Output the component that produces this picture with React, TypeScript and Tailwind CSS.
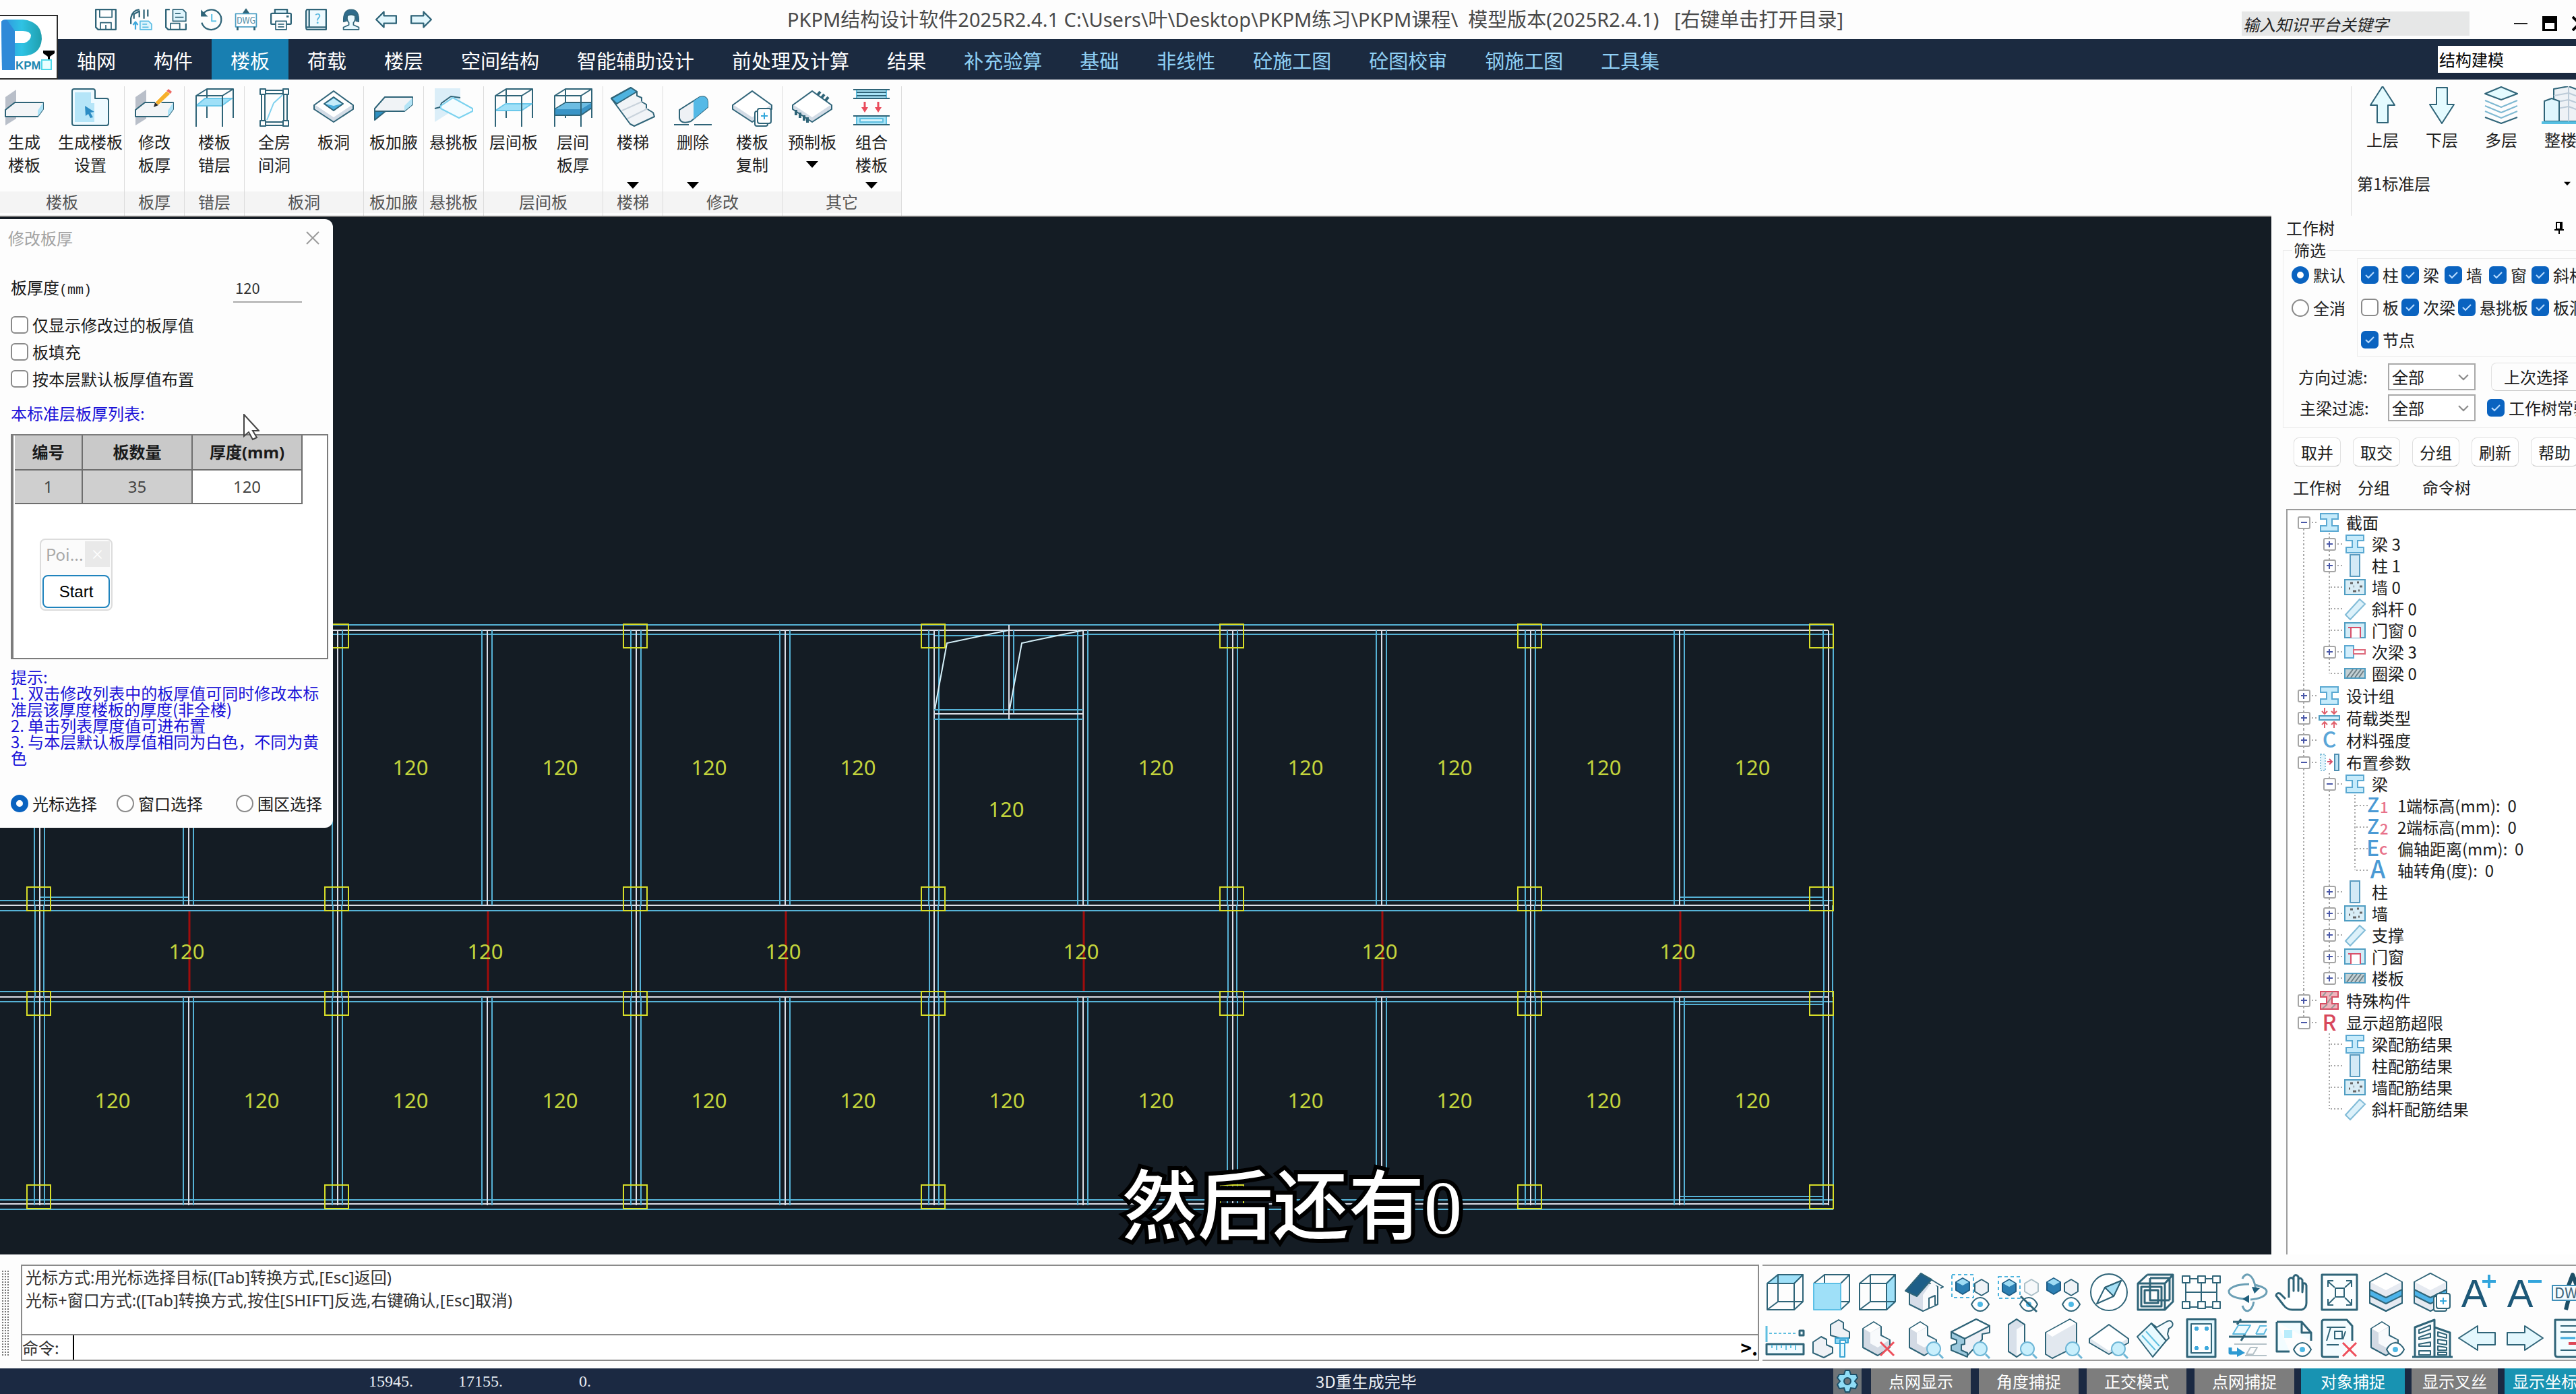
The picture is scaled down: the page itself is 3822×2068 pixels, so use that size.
import React from 'react';
import clsx from 'clsx';

const INK = '#2f6478';
const CYAN = '#9fe0f8';
const PALE = '#e3f7fd';

type IconProps = { children: React.ReactNode; className?: string };

const Ic: React.FC<IconProps> = ({ children, className = 'w-14 h-14' }) => (
  <svg
    viewBox="0 0 56 56"
    className={clsx('shrink-0 overflow-visible', className)}
    fill="none"
    stroke={INK}
    strokeWidth="2"
    strokeLinejoin="round"
    aria-hidden="true"
  >
    {children}
  </svg>
);

/* ---------- shared icon parts ---------- */

const Mag = ({ x = 42, y = 44 }) => (
  <g stroke="#6db6d6">
    <path d={`M${x + 8} ${y + 8} l6 6`} strokeWidth="3" />
    <circle cx={x} cy={y} r="10" fill="#c9effc" />
  </g>
);
const Eye = ({ x = 42, y = 46 }) => (
  <g>
    <path
      d={`M${x - 13} ${y} q5 -10 13 -10 q8 0 13 10 q-5 10 -13 10 q-8 0 -13 -10z`}
      fill="#fff"
    />
    <circle cx={x} cy={y} r="4" fill="#4fb9e6" stroke="none" />
  </g>
);
const RedX = ({ x = 42, y = 44 }) => (
  <path
    d={`M${x - 10} ${y - 10} l20 20 M${x + 10} ${y - 10} l-20 20`}
    stroke="#ee4f5b"
    strokeWidth="3"
  />
);
const CopyBadge = ({ x = 30, y = 30 }) => (
  <g>
    <rect x={x} y={y + 4} width="19" height="22" rx="3" fill="#fff" />
    <rect x={x + 4} y={y} width="20" height="22" rx="3" fill="#fff" />
    <path d={`M${x + 14} ${y + 6} v10 M${x + 9} ${y + 11} h10`} stroke="#35a8dc" />
  </g>
);
const LBlock = () => (
  <g>
    <path d="M6 14 L22 4 L33 11 V24 L46 31 V42 L28 54 L6 42z" fill="#d3dae4" />
    <path d="M7 14 L17 20 L32 11 L22 5z" fill="#fff" stroke="none" />
    <path d="M17 20 L32 12 V25 L45 31 L28 42 L17 36z" fill="#f8fafc" stroke="none" />
  </g>
);
const Prism = ({ x, y, dark }: { x: number; y: number; dark?: boolean }) => (
  <g>
    <path
      d={`M${x - 10} ${y - 6} l10 -6 l10 6 v12 l-10 6 l-10 -6z`}
      fill={dark ? '#2c7fb3' : '#eef2f6'}
      stroke={dark ? '#1d5d86' : INK}
    />
    {dark && <path d={`M${x - 9} ${y - 6} l9 -5 l9 5 l-9 5z`} fill="#9fdcf4" stroke="none" />}
  </g>
);
const Cube = ({ face }: { face: 'top' | 'front' | 'right' }) => (
  <Ic>
    {face === 'top' && <path d="M1 15 L17 2 H54 L41 15z" fill={CYAN} stroke="#5cc0e6" />}
    {face === 'right' && <path d="M41 15 L54 2 V42 L41 54z" fill={CYAN} stroke="#5cc0e6" />}
    <path d="M17 2 H54 V42 H17z M1 15 L17 2 M41 15 L54 2 M1 54 L17 42 M41 54 L54 42" />
    <rect
      x="1"
      y="15"
      width="40"
      height="39"
      fill={face === 'front' ? CYAN : 'none'}
      stroke={face === 'front' ? '#5cc0e6' : INK}
    />
  </Ic>
);
const Frame = ({ plane }: { plane: React.ReactNode }) => (
  <Ic>
    <path d="M17 1 V44 M56 1 V44" />
    {plane}
    <path d="M1 57 V11 L17 1 H56 L40 11 H1 M40 11 V57" />
  </Ic>
);
const SlabIcon = ({ children }: { children?: React.ReactNode }) => (
  <Ic>
    <path d="M-1 25 L28 4 L57 25 V31 L28 50 L-1 31z" fill="#d3dce6" />
    <path d="M1 25 L28 6 L55 25 L28 43z" fill="#fff" stroke="none" />
    {children}
  </Ic>
);
const WallSlab = ({ children }: { children?: React.ReactNode }) => (
  <Ic>
    <path d="M0 13 L16 2 V45 L0 55z" fill="#b9bfc9" stroke="none" />
    <path d="M0 32 L14 21 H56 V31 L48 42 H0z" fill="#f3f5f7" />
    <path d="M48 42 V33 L56 21 V31z" fill="#aee3f7" stroke="none" />
    {children}
  </Ic>
);

/* ---------- ribbon ---------- */

type Tool = { label: string; icon: React.ReactNode; arrow?: boolean; arrowHigh?: boolean };
type Group = { name: string; tools: Tool[] };

const groups: Group[] = [
  {
    name: '楼板',
    tools: [
      { label: '生成\n楼板', icon: <WallSlab /> },
      {
        label: '生成楼板\n设置',
        icon: (
          <Ic>
            <path
              d="M4 1 H32 Q35 1 35 4 V15 H52 Q55 15 55 18 V52 Q55 55 52 55 H4 Q1 55 1 52 V4 Q1 1 4 1z"
              fill="#eefaff"
            />
            <path d="M5 6 H29 V22 H34 V50 H5z" fill="#b5e5f8" stroke="none" />
            <path d="M20 26 L34 35 L28 36 L32 43 L28 44 L25 38 L21 41z" fill="#2b8cc4" stroke="none" />
          </Ic>
        ),
      },
    ],
  },
  {
    name: '板厚',
    tools: [
      {
        label: '修改\n板厚',
        icon: (
          <WallSlab>
            <path d="M29 21 L46 4 L52 8 L34 25z" fill="#f6b02c" stroke="#fff" strokeWidth="1" />
            <path d="M46 4 L49 1 L54 5 L52 8z" fill="#ee6a62" stroke="none" />
            <path d="M29 21 L34 25 L27 28z" fill="#2b2b2b" stroke="none" />
          </WallSlab>
        ),
      },
    ],
  },
  {
    name: '错层',
    tools: [
      {
        label: '楼板\n错层',
        icon: <Frame plane={<path d="M1 26 L14 15 H54 L39 26z" fill={CYAN} stroke="#6cc8ea" />} />,
      },
    ],
  },
  {
    name: '板洞',
    tools: [
      {
        label: '全房\n间洞',
        icon: (
          <Ic>
            <path d="M9 8 V50 M14 8 V50 M42 8 V50 M47 8 V50 M12 3 H44 M12 8 H44 M12 50 H44 M12 55 H44" />
            <path d="M17 47 L27 22 L40 10" stroke="#7fd0ee" />
            <path
              d="M7 1 h8 v8 h-8z M41 1 h8 v8 h-8z M7 48 h8 v8 h-8z M41 48 h8 v8 h-8z"
              fill="#fff"
            />
          </Ic>
        ),
      },
      {
        label: '板洞',
        icon: (
          <SlabIcon>
            <path d="M14 23 L28 13 L42 23 L28 33z" fill="#4aaede" />
            <path d="M16 23 L28 15 L40 23 L28 26z" fill="#c5ecfa" stroke="none" />
          </SlabIcon>
        ),
      },
    ],
  },
  {
    name: '板加腋',
    tools: [
      {
        label: '板加腋',
        icon: (
          <Ic>
            <path d="M0 34 H16 L0 47z" fill="#2f90c2" />
            <path d="M0 30 L15 13 H56 V24 L44 34 H0z" fill="#f0f3f6" />
            <path d="M44 34 V26 L56 14 V24z" fill="#b4e4f6" stroke="none" />
          </Ic>
        ),
      },
    ],
  },
  {
    name: '悬挑板',
    tools: [
      {
        label: '悬挑板',
        icon: (
          <Ic>
            <path d="M0 0 H38 V26 L0 50z" fill="#dbeef8" stroke="none" />
            <path d="M0 30 L8 28 L10 22 L24 12 L38 14" />
            <path d="M9 26 L27 14 L56 30 V34 L36 44 L9 30z" fill="#f4fcff" stroke="#7bd2ef" />
          </Ic>
        ),
      },
    ],
  },
  {
    name: '层间板',
    tools: [
      {
        label: '层间板',
        icon: <Frame plane={<path d="M1 33 L16 23 H55 L40 33z" fill={CYAN} stroke="#6cc8ea" />} />,
      },
      {
        label: '层间\n板厚',
        icon: (
          <Frame
            plane={
              <>
                <path d="M1 31 L17 21 H56 V29 L40 40 H1z" fill="#3a94c6" />
                <path d="M2 31 L17 22 H55 L40 31z" fill="#6cbce2" stroke="none" />
              </>
            }
          />
        ),
      },
    ],
  },
  {
    name: '楼梯',
    tools: [
      {
        label: '楼梯',
        arrow: true,
        icon: (
          <Ic>
            <path
              d="M-4 15 L25 -1 L34 5 V11 L41 14 V20 L48 24 V30 L58 36 L60 42 L30 56 L24 53z"
              fill="#f1f4f7"
            />
            <path d="M-4 15 L25 -1 L34 5 L4 23z" fill="#4fb3df" />
            <path d="M12 33 L41 20 M20 45 L50 30" stroke="#c9d3dc" />
          </Ic>
        ),
      },
    ],
  },
  {
    name: '修改',
    tools: [
      {
        label: '删除',
        arrow: true,
        icon: (
          <Ic>
            <path d="M0 54 H22 M30 54 H56" />
            <path d="M8 32 L38 13 Q49 10 50 20 V28 L25 49 Q10 54 8 44z" fill="#eef1f5" />
            <path d="M29 19 L38 13 Q49 10 50 20 V28 L29 46 Z" fill="#55b9e6" stroke="none" />
          </Ic>
        ),
      },
      {
        label: '楼板\n复制',
        icon: (
          <SlabIcon>
            <CopyBadge x={32} y={30} />
          </SlabIcon>
        ),
      },
    ],
  },
  {
    name: '其它',
    tools: [
      {
        label: '预制板',
        arrow: true,
        arrowHigh: true,
        icon: (
          <SlabIcon>
            <path
              d="M36 10 l4 -5 M42 14 l4 -5 M48 18 l4 -5 M4 40 v-8 M10 44 v-8 M16 48 v-8 M21 51 v-8"
              strokeWidth="4"
            />
          </SlabIcon>
        ),
      },
      {
        label: '组合\n楼板',
        arrow: true,
        icon: (
          <Ic>
            <path d="M6 2 H50 V15 H6z M6 41 H50 V54 H6z" fill="#a9e4f7" stroke="#5fbfe0" />
            <path d="M1 2 H55 M1 15 H55 M1 41 H55 M1 54 H55 M6 6 H50 M6 11 H50" />
            <path d="M11 45 H45 V50 H11z" fill="#d8f4fc" stroke="#5fbfe0" />
            <path d="M18 20 V30 M38 20 V30" stroke="#ea4c5c" strokeWidth="3" />
            <path d="M13 28 H23 L18 36z M33 28 H43 L38 36z" fill="#ea4c5c" stroke="none" />
          </Ic>
        ),
      },
    ],
  },
];

const Caret = ({ className = 'w-[18px] h-[10px]' }) => (
  <svg viewBox="0 0 18 10" className={className} aria-hidden="true">
    <path d="M0 0 H18 L9 10z" fill="#000" />
  </svg>
);

const quickIcons: { name: string; icon: React.ReactNode }[] = [
  {
    name: '保存',
    icon: (
      <>
        <path d="M2 2 H54 V54 H8 L2 48z" fill="#fff" strokeWidth="4" />
        <path d="M12 2 V22 H44 V2 M14 54 V36 H42 V54 M28 42 V54" strokeWidth="3" />
      </>
    ),
  },
  {
    name: '恢复',
    icon: (
      <>
        <path d="M2 24 Q6 4 24 2 M10 26 V14 L24 6 V22 M2 24 V40 M36 2 V26 M46 2 V20" strokeWidth="4" />
        <path d="M14 54 V36 M8 42 L14 34 L20 42" stroke="#3fa9dc" strokeWidth="4" />
        <path d="M26 32 H48 L56 40 V54 H26z M32 40 H44 M32 48 H48" fill="#dff5fd" stroke="#5cbde4" strokeWidth="3" />
      </>
    ),
  },
  {
    name: '另存',
    icon: (
      <>
        <path d="M12 2 H2 V48 L8 54 H54 V38" strokeWidth="4" />
        <path d="M20 2 H46 L54 10 V32 H20z" fill="#dff5fd" strokeWidth="3" />
        <path d="M14 54 V38 H38 V54 M26 12 H40 M26 22 H48" strokeWidth="3" />
      </>
    ),
  },
  {
    name: '历史',
    icon: (
      <>
        <path d="M6 16 A26 26 0 1 1 4 36" fill="none" strokeWidth="4" />
        <path d="M2 2 V20 H20z" fill={INK} stroke="none" />
        <path d="M30 14 V32 H42" stroke="#6cc6e8" strokeWidth="4" />
      </>
    ),
  },
  {
    name: 'DWG',
    icon: (
      <>
        <path d="M20 12 L28 0 L36 12z" fill={INK} />
        <rect x="1" y="13" width="54" height="34" fill="#fff" strokeWidth="3" stroke="#4d9fc4" />
        <path d="M6 47 V56 M50 47 V56" strokeWidth="5" />
        <text x="28" y="38" fontSize="22" textAnchor="middle" fill="#4d8aa4" stroke="none">
          DWG
        </text>
      </>
    ),
  },
  {
    name: '打印',
    icon: (
      <>
        <path d="M12 12 V2 H44 V12" fill="#dff5fd" strokeWidth="4" />
        <rect x="2" y="12" width="52" height="28" rx="2" fill="#fff" strokeWidth="4" />
        <path d="M14 32 H42 V54 H14z M20 40 H36 M20 47 H36" fill="#fff" strokeWidth="3" />
        <path d="M42 20 H48" strokeWidth="5" />
      </>
    ),
  },
  {
    name: '帮助',
    icon: (
      <>
        <path d="M4 2 H54 V54 H4 Q2 54 2 46 V6z M10 2 V46 M4 48 H54" fill="#eefaff" strokeWidth="4" />
        <text x="32" y="38" fontSize="34" textAnchor="middle" fill="#4fb4dc" stroke="none">
          ?
        </text>
      </>
    ),
  },
  {
    name: '客服',
    icon: (
      <>
        <path d="M8 34 Q6 2 28 2 Q50 2 48 34 L40 32 V18 Q28 12 16 18 V32z" fill="#2f6c8c" />
        <path d="M18 18 Q28 12 38 18 Q40 30 34 36 V42 L48 48 V54 H8 V48 L22 42 V36 Q16 30 18 18z" fill="#e8f8fe" strokeWidth="3" />
      </>
    ),
  },
  { name: '撤销', icon: <path d="M2 28 L22 8 V18 H54 V38 H22 V48z" fill={PALE} strokeWidth="4" /> },
  { name: '重做', icon: <path d="M54 28 L34 8 V18 H2 V38 H34 V48z" fill={PALE} strokeWidth="4" /> },
];

const mainTabs = ['轴网', '构件', '楼板', '荷载', '楼层', '空间结构', '智能辅助设计', '前处理及计算', '结果'];
const extraTabs = ['补充验算', '基础', '非线性', '砼施工图', '砼图校审', '钢施工图', '工具集'];

const TitleBar = () => (
  <header className="relative h-[58px] shrink-0 bg-[#fdfdfd] flex items-center">
    <div className="flex items-center gap-5 pl-[141px]">
      {quickIcons.map((q) => (
        <button key={q.name} type="button" title={q.name} className="block">
          <Ic className="w-8 h-8">{q.icon}</Ic>
        </button>
      ))}
    </div>
    <h1 className="ml-[527px] text-[29px] leading-9 text-[#4a4a4a] whitespace-pre font-['Noto_Sans','Noto_Sans_CJK_SC',sans-serif]">
      {'PKPM结构设计软件2025R2.4.1 C:\\Users\\叶\\Desktop\\PKPM练习\\PKPM课程\\  模型版本(2025R2.4.1)   [右键单击打开目录]'}
    </h1>
    <div className="ml-auto flex items-center shrink-0">
      <input
        type="text"
        aria-label="知识平台搜索"
        placeholder="输入知识平台关键字"
        className="w-[338px] h-9 bg-[#e6e7e7] text-2xl italic placeholder:text-[#222] px-[2px] mt-3"
      />
      <div className="flex items-center w-[158px] pl-[66px] gap-[22px] mt-3 overflow-hidden">
        <button type="button" title="最小化" className="shrink-0">
          <svg viewBox="0 0 20 22" className="w-5 h-[22px]">
            <path d="M0 11 H20" stroke="#222" strokeWidth="2" />
          </svg>
        </button>
        <button type="button" title="还原" className="shrink-0">
          <svg viewBox="0 0 22 22" className="w-[22px] h-[22px]">
            <path d="M0 0 H22 V22 H0z M4 10 V19 H18 V10z" fill="#000" fillRule="evenodd" />
          </svg>
        </button>
        <button type="button" title="关闭" className="shrink-0">
          <svg viewBox="0 0 22 22" className="w-[22px] h-[22px]">
            <path d="M1 1 L21 21 M21 1 L1 21" stroke="#000" strokeWidth="4" />
          </svg>
        </button>
      </div>
    </div>
    {/* App button hangs over the tab bar */}
    <button
      type="button"
      title="PKPM"
      className="absolute left-0 top-[22px] z-20 w-[86px] h-24 bg-white border-2 border-l-0 border-[#2b2b2b]"
    >
      <svg viewBox="0 0 84 92" className="w-full h-full">
        <defs>
          <linearGradient id="logo" x1="0" y1="0" x2="1" y2="0">
            <stop offset="0" stopColor="#2f8ede" />
            <stop offset="0.5" stopColor="#2fc3e4" />
            <stop offset="1" stopColor="#1f9fae" />
          </linearGradient>
        </defs>
        <path
          d="M2 8 Q4 5 10 5 H34 Q62 8 62 34 Q60 58 34 59 H22 V40 H36 Q46 36 46 28 Q44 22 34 22 H22 V80 H3z"
          fill="url(#logo)"
        />
        <path d="M2 8 Q4 5 10 5 L22 22 V80 H3z" fill="#2f8ad8" />
        <text x="23" y="79" fontSize="17" fontWeight="700" fill="#1d86b0" fontFamily="Liberation Sans">
          KPM
        </text>
        <rect x="62" y="65" width="14" height="14" fill="#eaffff" stroke="#4fd8e8" strokeWidth="2" />
        <path d="M64 51 H81 V55 L74 60 V64 H71 V60 L64 55z" fill="#000" />
      </svg>
    </button>
  </header>
);

const MenuBar = () => (
  <nav className="h-[60px] shrink-0 bg-[#1b2a40] flex items-stretch pl-[86px]">
    {mainTabs.map((t) => (
      <button
        key={t}
        type="button"
        className={clsx('px-7 pt-1 text-[29px] text-white', t === '楼板' && 'bg-[#187fb1]')}
      >
        {t}
      </button>
    ))}
    {extraTabs.map((t) => (
      <button key={t} type="button" className="px-7 pt-1 text-[29px] text-[#8fd0f5]">
        {t}
      </button>
    ))}
    <select
      aria-label="模块"
      className="appearance-none ml-auto mt-[10px] h-10 w-[205px] bg-white text-2xl text-black pl-[2px]"
    >
      <option>结构建模</option>
    </select>
  </nav>
);

const floorTools: Tool[] = [
  {
    label: '上层',
    icon: (
      <Ic>
        <path d="M28 0 L46 28 H36 V54 H20 V28 H10z" fill="#e4fbff" />
      </Ic>
    ),
  },
  {
    label: '下层',
    icon: (
      <Ic>
        <path d="M28 55 L46 27 H36 V2 H20 V27 H10z" fill="#e4fbff" />
      </Ic>
    ),
  },
  {
    label: '多层',
    icon: (
      <Ic>
        <path d="M4 11 L28 1 L52 11 L28 20z" fill="#e4fbff" />
        <path d="M4 21 L28 31 L52 21 M4 29 L28 39 L52 29 M4 37 L28 47 L52 37" stroke="#7fb9d2" />
        <path d="M4 46 L28 55 L52 46" />
      </Ic>
    ),
  },
  {
    label: '整楼',
    icon: (
      <Ic>
        <path d="M18 4 L40 0 L56 6 V52 H18z" fill="#eef2f6" />
        <path d="M40 0 V52 M18 14 L40 10 L56 16 M18 24 L40 20 L56 26 M18 34 L40 30 L56 36" stroke="#bccbd8" />
        <path d="M4 22 L15 18 L26 22 V52 H4z" fill="#dff6fd" />
        <path d="M0 54 H56" stroke="#56bfe2" strokeWidth="4" />
      </Ic>
    ),
  },
];

const Ribbon = () => (
  <section className="h-[202px] shrink-0 bg-[#fdfdfd] flex pt-[10px]">
    {groups.map((g, gi) => (
      <div key={g.name} className="flex flex-col border-r border-[#dcdcdc]">
        <div className="flex h-[156px]">
          {g.tools.map((t, i) => (
            <button
              key={t.label}
              type="button"
              className={clsx(
                'flex flex-col items-center pt-[3px]',
                gi === 0 ? (i === 0 ? 'w-[72px]' : 'w-[112px] pl-3') : 'w-[88px]',
              )}
            >
              {t.icon}
              <span className="mt-[6px] text-2xl leading-[34px] text-[#1f1f1f] whitespace-pre-line">
                {t.label}
              </span>
              {t.arrow && (
                <span className={clsx(t.arrowHigh ? 'pt-3' : 'mt-auto pb-1')}>
                  <Caret />
                </span>
              )}
            </button>
          ))}
        </div>
        <div className="h-8 bg-[#f4f4f4] text-center text-2xl leading-[30px] text-[#555]">{g.name}</div>
      </div>
    ))}
    <div className="ml-auto w-[334px] border-l border-[#dcdcdc] overflow-hidden flex flex-col">
      <div className="flex pl-[2px] h-[127px]">
        {floorTools.map((t) => (
          <button key={t.label} type="button" className="w-[88px] shrink-0 flex flex-col items-center">
            {t.icon}
            <span className="mt-[6px] text-2xl leading-[34px] text-[#1f1f1f]">{t.label}</span>
          </button>
        ))}
      </div>
      <div className="flex items-center justify-between pl-2 pr-[8px] h-[34px]">
        <select aria-label="标准层" className="appearance-none flex-1 text-2xl leading-8 text-[#222] bg-transparent">
          <option>第1标准层</option>
        </select>
        <Caret className="w-[10px] h-[7px]" />
      </div>
    </div>
  </section>
);

/* ---------- form controls ---------- */

const Check = ({ label, on = false }: { label: string; on?: boolean }) => (
  <label className="flex items-center gap-[6px] text-2xl leading-8 whitespace-nowrap">
    <span className="relative block w-[26px] h-[26px] shrink-0">
      <input
        type="checkbox"
        defaultChecked={on}
        className="peer appearance-none block w-[26px] h-[26px] rounded-[6px] border-2 border-[#8a8a8a] bg-white checked:bg-[#0a63c0] checked:border-[#0a63c0]"
      />
      <svg
        viewBox="0 0 26 26"
        className="absolute inset-0 pointer-events-none hidden peer-checked:block"
        fill="none"
        stroke="#b9dcff"
        strokeWidth="2"
      >
        <path d="M7 13 L11 17 L19 9" />
      </svg>
    </span>
    {label}
  </label>
);

const Radio = ({ label, name, on = false }: { label: string; name: string; on?: boolean }) => (
  <label className="flex items-center gap-[6px] text-2xl leading-8 whitespace-nowrap">
    <input
      type="radio"
      name={name}
      defaultChecked={on}
      className="appearance-none block w-[26px] h-[26px] shrink-0 rounded-full border-2 border-[#8a8a8a] bg-white checked:border-8 checked:border-[#0a63c0]"
    />
    {label}
  </label>
);

const FilterSelect = ({ id }: { id: string }) => (
  <span className="relative block w-[130px] h-10 shrink-0">
    <select
      id={id}
      className="appearance-none w-full h-full border-2 border-[#a9a9a9] bg-white text-2xl pl-1 leading-8"
    >
      <option>全部</option>
    </select>
    <svg
      viewBox="0 0 16 10"
      className="absolute right-[10px] top-4 w-4 h-[10px] pointer-events-none"
      fill="none"
      stroke="#888"
      strokeWidth="2"
    >
      <path d="M1 1 L8 8 L15 1" />
    </svg>
  </span>
);

/* ---------- plan ---------- */

const GX = (i: number) => Math.round(59 + 221.2 * i);
const LINE = '#56b2d6';
const AXIS = '#dcdfe8';
const bands = [
  { top: 927, axis: 935, low: 941, box: 926 },
  { top: 1336, axis: 1343, low: 1351, box: 1316 },
  { top: 1471, axis: 1479, low: 1486, box: 1471 },
  { top: 1780, axis: 1786, low: 1794, box: 1758 },
];
const cols = Array.from({ length: 13 }, (_, i) => i);

const labels: [number, number][] = [
  ...[2, 3, 4, 5, 7, 8, 9, 10, 11].map((i): [number, number] => [GX(i) + 108, 1139]),
  [GX(6) + 107, 1201],
  ...[1, 3, 5, 7, 9, 11].map((i): [number, number] => [GX(i) - 3, 1412]),
  ...cols.slice(0, 12).map((i): [number, number] => [GX(i) + 108, 1633]),
];

const VBeam = ({ x, y1, y2, half = 8 }: { x: number; y1: number; y2: number; half?: number }) => (
  <g strokeWidth="2">
    <path d={`M${x - half} ${y1} V${y2} M${x + half - 1} ${y1} V${y2}`} stroke={LINE} />
    <path d={`M${x} ${y1} V${y2}`} stroke={AXIS} />
  </g>
);

const Plan = () => (
  <svg
    viewBox="0 322 3370 1539"
    preserveAspectRatio="xMinYMin slice"
    className="absolute inset-0 w-full h-full"
    fill="none"
  >
    {bands.map((b, i) => (
      <g key={b.top} strokeWidth="2">
        <path
          d={`M0 ${b.top} H2720 M0 ${b.low} H${i === 0 ? GX(6) : 2720}`}
          stroke={LINE}
        />
        {i === 0 && <path d={`M${GX(6)} 943 H${GX(7)} M${GX(7)} ${b.low} H2720`} stroke={LINE} />}
        <path d={`M0 ${b.axis} H2712`} stroke={AXIS} />
      </g>
    ))}
    {/* beams set off from the axis in the end bays */}
    <path
      d={`M${GX(0)} 1331 H${GX(1)} M${GX(11)} 1331 H2705 M${GX(11)} 1490 H2705 M${GX(11)} 1775 H2705`}
      stroke={LINE}
      strokeWidth="2"
    />
    {cols.map((i) => {
      const even = i % 2 === 0;
      const x = GX(i);
      return (
        <g key={i}>
          <VBeam x={x} y1={935} y2={1343} />
          {even && <VBeam x={x} y1={1343} y2={1479} half={7} />}
          <VBeam x={x} y1={1479} y2={1788} />
          {!even && <path d={`M${x + 1} 1352 V1470`} stroke="#a00c0c" strokeWidth="3" />}
        </g>
      );
    })}
    {/* stair core */}
    <g strokeWidth="2">
      <path d={`M${GX(6)} 1053 H${GX(7)} M${GX(6)} 1067 H${GX(7)} M1489 935 V1059 M1504 935 V1059`} stroke={LINE} />
      <path d={`M${GX(6)} 1059 H${GX(7)} M1497 927 V1067`} stroke={AXIS} />
      <path
        d="M1387 1052 L1405 954 L1496 935 M1498 1052 L1516 954 L1607 935"
        stroke="#d7f2fb"
      />
    </g>
    {cols
      .filter((i) => i % 2 === 0)
      .map((i) =>
        bands.map((b) => (
          <rect
            key={`${i}-${b.box}`}
            x={i === 12 ? 2685 : GX(i) - 19}
            y={b.box}
            width="35"
            height="35"
            stroke="#d8de28"
            strokeWidth="2"
          />
        )),
      )}
    {labels.map(([x, y]) => (
      <text
        key={`${x}-${y}`}
        x={x}
        y={y + 11}
        textAnchor="middle"
        fontSize="31"
        fontFamily="'Noto Sans', sans-serif"
        fill="#c3d43c"
      >
        120
      </text>
    ))}
  </svg>
);

const rows = [{ no: '1', count: '35', thick: '120' }];

const ThicknessDialog = () => (
  <div
    role="dialog"
    aria-label="修改板厚"
    className="absolute left-0 top-[3px] w-[494px] pb-4 bg-[#fdfdfd] rounded-r-xl text-2xl text-[#1a1a1a]"
  >
    <div className="h-14 pl-3 pr-5 flex items-center justify-between text-[#a3a3a3]">
      <h2>修改板厚</h2>
      <button type="button" title="关闭">
        <svg viewBox="0 0 20 20" className="w-5 h-5" fill="none" stroke="#9a9a9a" strokeWidth="2">
          <path d="M1 1 L19 19 M19 1 L1 19" />
        </svg>
      </button>
    </div>
    <div className="h-[48px] mt-[22px] pl-4 flex items-center">
      <label htmlFor="thick" className="w-[330px]">
        板厚度<span className="font-['Liberation_Mono'] text-xl">(mm)</span>
      </label>
      <input
        id="thick"
        defaultValue="120"
        className="w-[102px] h-11 pl-[3px] text-[22px] text-[#333] border-b-2 border-[#aaa] bg-transparent"
      />
    </div>
    <div className="mt-[11px] pl-4">
      {['仅显示修改过的板厚值', '板填充', '按本层默认板厚值布置'].map((t) => (
        <div key={t} className="h-10 flex items-center">
          <Check label={t} />
        </div>
      ))}
    </div>
    <p className="h-[62px] pl-4 leading-[62px] text-[#1a12d8]">本标准层板厚列表:</p>
    <div className="relative mx-4 w-[471px] h-[334px] border-2 border-l-4 border-[#7c7c7c] bg-white pl-[2px]">
      <table className="w-[426px] table-fixed border-collapse text-center font-['Noto_Sans','Noto_Sans_CJK_SC',sans-serif]">
        <colgroup>
          <col className="w-[100px]" />
          <col className="w-[163px]" />
          <col className="w-[163px]" />
        </colgroup>
        <thead>
          <tr className="h-[51px] bg-[#c9c9c9]">
            {['编号', '板数量', '厚度(mm)'].map((h) => (
              <th key={h} scope="col" className="border-2 border-[#6e6e6e] border-t-0 border-l-0 font-bold p-0">
                {h}
              </th>
            ))}
          </tr>
        </thead>
        <tbody>
          {rows.map((r) => (
            <tr key={r.no} className="h-[50px] text-[#444]">
              <td className="border-2 border-[#6e6e6e] border-l-0 bg-[#cfcfcf] p-0">{r.no}</td>
              <td className="border-2 border-[#6e6e6e] bg-[#cfcfcf] p-0">{r.count}</td>
              <td className="border-2 border-[#6e6e6e] bg-white p-0">{r.thick}</td>
            </tr>
          ))}
        </tbody>
      </table>
      <div className="absolute left-[39px] top-[153px] w-[108px] h-[107px] rounded-lg border-2 border-[#dcdcdc] bg-[#fbfbfb] p-[2px] flex flex-col justify-between">
        <div className="flex items-center justify-between pl-[5px] text-[#a8a8a8]">
          Poi...
          <span className="w-[37px] h-[38px] bg-[#e9e9e9] flex items-center justify-center text-white text-xl">
            ×
          </span>
        </div>
        <button
          type="button"
          className="h-[49px] rounded-lg border-2 border-[#1f83bd] bg-white font-['Liberation_Sans'] text-2xl text-black"
        >
          Start
        </button>
      </div>
      {/* pointer */}
      <svg viewBox="0 0 24 40" className="absolute left-[341px] top-[-32px] w-6 h-10">
        <path d="M1 1 V33 L8 27 L14 38 L20 35 L14 25 H23z" fill="#fff" stroke="#444" strokeWidth="2" />
      </svg>
    </div>
    <div className="mt-[14px] pl-4 leading-6 text-[#1a12d8] whitespace-nowrap">
      <p>提示:</p>
      <p>1. 双击修改列表中的板厚值可同时修改本标</p>
      <p>准层该厚度楼板的厚度(非全楼)</p>
      <p>2. 单击列表厚度值可进布置</p>
      <p>3. 与本层默认板厚值相同为白色，不同为黄</p>
      <p>色</p>
    </div>
    <div className="mt-9 h-10 pl-4 flex items-center">
      <div className="w-[157px]">
        <Radio name="pick" label="光标选择" on />
      </div>
      <div className="w-[177px]">
        <Radio name="pick" label="窗口选择" />
      </div>
      <Radio name="pick" label="围区选择" />
    </div>
  </div>
);

/* ---------- work tree ---------- */

type Kind =
  | 'beam' | 'column' | 'wall' | 'brace' | 'door' | 'sub' | 'hatch'
  | 'load' | 'C' | 'place' | 'Z1' | 'Z2' | 'Ec' | 'A' | 'special' | 'R';

type Node = { text: string; kind: Kind; open?: boolean; more?: boolean; children?: Node[] };

const tree: Node[] = [
  {
    text: '截面',
    kind: 'beam',
    open: true,
    children: [
      { text: '梁 3', kind: 'beam', more: true },
      { text: '柱 1', kind: 'column', more: true },
      { text: '墙 0', kind: 'wall' },
      { text: '斜杆 0', kind: 'brace' },
      { text: '门窗 0', kind: 'door' },
      { text: '次梁 3', kind: 'sub', more: true },
      { text: '圈梁 0', kind: 'hatch' },
    ],
  },
  { text: '设计组', kind: 'beam', more: true },
  { text: '荷载类型', kind: 'load', more: true },
  { text: '材料强度', kind: 'C', more: true },
  {
    text: '布置参数',
    kind: 'place',
    open: true,
    children: [
      {
        text: '梁',
        kind: 'beam',
        open: true,
        children: [
          { text: '1端标高(mm):  0', kind: 'Z1' },
          { text: '2端标高(mm):  0', kind: 'Z2' },
          { text: '偏轴距离(mm):  0', kind: 'Ec' },
          { text: '轴转角(度):  0', kind: 'A' },
        ],
      },
      { text: '柱', kind: 'column', more: true },
      { text: '墙', kind: 'wall', more: true },
      { text: '支撑', kind: 'brace', more: true },
      { text: '门窗', kind: 'door', more: true },
      { text: '楼板', kind: 'hatch', more: true },
    ],
  },
  { text: '特殊构件', kind: 'special', more: true },
  {
    text: '显示超筋超限',
    kind: 'R',
    open: true,
    children: [
      { text: '梁配筋结果', kind: 'beam' },
      { text: '柱配筋结果', kind: 'column' },
      { text: '墙配筋结果', kind: 'wall' },
      { text: '斜杆配筋结果', kind: 'brace' },
    ],
  },
];

const IBEAM = 'M2 2 H28 V10 H19 V20 H28 V28 H2 V20 H11 V10 H2z';

const kindArt: Record<Kind, React.ReactNode> = {
  beam: <path d={IBEAM} fill="#c6ebfb" stroke="#5ba9d2" />,
  column: <path d="M8 -1 H22 V31 H8z" fill="#d3eaf6" stroke="#5b9cc0" />,
  wall: (
    <>
      <path d="M0 4 H30 V26 H0z" fill="#d9edf6" stroke="#4f9dc2" />
      <path d="M8 9 h4 M18 8 h3 M22 14 h4 M6 17 h2 M12 21 h5 M20 20 h2 M13 14 h1" stroke="#666" strokeWidth="3" />
    </>
  ),
  brace: <path d="M1 24 L22 1 L30 8 L8 31z" fill="#dcf1fa" stroke="#82bcd8" />,
  door: (
    <>
      <path d="M0 4 H30 V26 H0z" fill="#d3ecf7" stroke="#4f9dc2" />
      <path d="M9 26 V11 H23 V26" fill="#fff" stroke="#d8506a" />
      <path d="M5 11 H23" stroke="#d8506a" />
    </>
  ),
  sub: (
    <>
      <path d="M0 6 H13 V24 H0z" fill="#d3eefb" stroke="#5ba9d2" />
      <path d="M13 12 H30 V18 H13z" fill="#fff" stroke="#dd6a7c" />
    </>
  ),
  hatch: (
    <>
      <path d="M0 8 H30 V22 H0z" fill="#c3d0d4" stroke="#4f9dc2" />
      <path d="M3 21 L12 9 M9 21 L18 9 M15 21 L24 9 M21 21 L28 11" stroke="#6d7f86" />
    </>
  ),
  load: (
    <>
      <path d="M0 12 H30 V18 H0z" fill="#d3eefb" stroke="#4f9dc2" />
      <path d="M8 0 V9 M4 5 L8 9 L12 5 M22 0 V9 M18 5 L22 9 L26 5 M8 30 V21 M4 25 L8 21 L12 25 M22 30 V21 M18 25 L22 21 L26 25" stroke="#e0616d" />
    </>
  ),
  C: <text x="15" y="26" textAnchor="middle" fontSize="32" fontWeight="500" fill="#5aa6d8" stroke="none">C</text>,
  place: (
    <>
      <path d="M2 3 H9 V27 H2z" fill="#e3f5fc" stroke="#8cc3dc" strokeDasharray="2 2" />
      <path d="M12 14 H19 M15 10 L19 14 L15 18" stroke="#d8506a" />
      <path d="M23 3 H29 V27 H23z" fill="#c3e6f6" stroke="#4f8fb2" />
    </>
  ),
  Z1: (
    <g stroke="none">
      <text x="-5" y="25" fontSize="30" fontWeight="500" fill="#4b9ad4">Z</text>
      <text x="14" y="26" fontSize="22" fontWeight="500" fill="#e8728a">1</text>
    </g>
  ),
  Z2: (
    <g stroke="none">
      <text x="-5" y="25" fontSize="30" fontWeight="500" fill="#4b9ad4">Z</text>
      <text x="14" y="26" fontSize="22" fontWeight="500" fill="#e8728a">2</text>
    </g>
  ),
  Ec: (
    <g stroke="none">
      <text x="-6" y="26" fontSize="32" fontWeight="500" fill="#4b9ad4">E</text>
      <text x="13" y="24" fontSize="24" fontWeight="500" fill="#e8728a">c</text>
    </g>
  ),
  A: <text x="11" y="27" textAnchor="middle" fontSize="36" fontWeight="500" fill="#4b9ad4" stroke="none">A</text>,
  special: (
    <>
      <path d={IBEAM} fill="#eeb4bd" stroke="#d64d62" />
      <path d="M5 9 L10 3 M15 9 L20 3 M12 19 L18 11 M5 27 L12 21 M18 27 L24 21" stroke="#999" />
    </>
  ),
  R: <text x="15" y="27" textAnchor="middle" fontSize="32" fontWeight="500" fill="#d8475c" stroke="none">R</text>,
};

const Guide = ({ up, down, across, box }: { up?: boolean; down?: boolean; across?: boolean; box?: '+' | '-' }) => (
  <svg viewBox="0 0 38 32" className="w-[38px] h-8 shrink-0 overflow-visible" fill="none" aria-hidden="true">
    <g stroke="#a8a8a8" strokeWidth="2" strokeDasharray="2 3">
      {up && <path d="M19 0 V16" />}
      {down && <path d="M19 16 V33" />}
      {across && <path d="M21 16 H40" />}
    </g>
    {box && (
      <>
        <rect x="11" y="8" width="17" height="17" rx="2" fill="#fff" stroke="#a5a5a5" strokeWidth="2" />
        <path d="M15 16 H24" stroke="#4a58a8" strokeWidth="2" />
        {box === '+' && <path d="M19 12 V21" stroke="#4a58a8" strokeWidth="2" />}
      </>
    )}
  </svg>
);

type TreeRowProps = { node: Node; first: boolean; last: boolean; trail: boolean[] };

const TreeRow: React.FC<TreeRowProps> = ({ node, first, last, trail }) => (
  <li>
    <div className="flex items-center h-8">
      {trail.map((t, i) => (
        <Guide key={i} up={t} down={t} />
      ))}
      <Guide
        up={!first || trail.length > 0}
        down={!last}
        across
        box={node.open ? '-' : node.more ? '+' : undefined}
      />
      <span className="w-[38px] flex justify-center shrink-0">
        <svg viewBox="0 0 30 30" className="w-[30px] h-[30px] overflow-visible" fill="none" strokeWidth="2">
          {kindArt[node.kind]}
        </svg>
      </span>
      <span className="pl-[6px] text-2xl leading-8 whitespace-pre">{node.text}</span>
    </div>
    {node.children && (
      <ul>
        {node.children.map((c, i) => (
          <TreeRow
            key={c.text}
            node={c}
            first={i === 0}
            last={i === node.children!.length - 1}
            trail={[...trail, !last]}
          />
        ))}
      </ul>
    )}
  </li>
);

const WorkTree = () => (
  <aside className="w-[452px] shrink-0 bg-[#fdfdfd] overflow-hidden flex flex-col text-[#1c1c1c]">
    <div className="h-9 shrink-0 pl-[22px] pr-[18px] flex items-center justify-between">
      <h2 className="text-2xl leading-9">工作树</h2>
      <svg viewBox="0 0 14 18" className="w-[14px] h-[18px]" fill="none" stroke="#000" strokeWidth="2">
        <path d="M3 1 H11 V11 H3z M0 12 H14 M7 12 V18 M9 1 V11" />
      </svg>
    </div>
    <fieldset className="ml-[17px] mt-[3px] min-w-0 h-[276px] border border-r-0 border-[#ececec]">
      <legend className="ml-[13px] px-[2px] text-2xl leading-6">筛选</legend>
      <div className="flex">
        <div className="w-[109px] pl-3 shrink-0">
          <div className="h-[49px] flex items-center"><Radio name="scope" label="默认" on /></div>
          <div className="h-[49px] flex items-center"><Radio name="scope" label="全消" /></div>
        </div>
        <div className="flex-1 border border-r-0 border-[#ececec] pl-[5px]">
          <div className="grid grid-cols-[60px_64px_66px_63px_auto] h-12 items-center">
            {['柱', '梁', '墙', '窗', '斜杆'].map((t) => (
              <Check key={t} label={t} on />
            ))}
          </div>
          <div className="grid grid-cols-[60px_84px_109px_auto] h-12 items-center">
            <Check label="板" />
            <Check label="次梁" on />
            <Check label="悬挑板" on />
            <Check label="板洞" on />
          </div>
          <div className="h-12 flex items-center">
            <Check label="节点" on />
          </div>
        </div>
      </div>
      <div className="mt-[7px] h-[46px] flex items-center">
        <label htmlFor="dir" className="w-[155px] pl-[22px] text-2xl shrink-0">方向过滤:</label>
        <FilterSelect id="dir" />
        <button type="button" className="ml-[23px] h-[42px] w-[140px] shrink-0 pl-[18px] text-left rounded-lg border border-[#e2e2e2] border-b-[#c8c8c8] text-2xl whitespace-nowrap">
          上次选择
        </button>
      </div>
      <div className="h-[46px] flex items-center">
        <label htmlFor="main" className="w-[155px] pl-[24px] text-2xl shrink-0">主梁过滤:</label>
        <FilterSelect id="main" />
        <span className="ml-[17px] shrink-0">
          <Check label="工作树常驻" on />
        </span>
      </div>
    </fieldset>
    <div className="flex gap-[18px] mt-[14px] pl-[33px] shrink-0">
      {['取并', '取交', '分组', '刷新', '帮助'].map((t) => (
        <button
          key={t}
          type="button"
          className="w-[70px] h-[43px] shrink-0 rounded-lg border border-[#e0e0e0] border-b-[#c4c4c4] bg-white text-2xl leading-8"
        >
          {t}
        </button>
      ))}
    </div>
    <div className="flex mt-[9px] h-11 pl-8 items-center shrink-0 text-2xl">
      {['工作树', '分组', '命令树'].map((t) => (
        <button key={t} type="button" className="w-24 text-left">
          {t}
        </button>
      ))}
    </div>
    <div className="flex-1 mt-[10px] ml-[22px] border-l-2 border-t-2 border-[#9c9c9c] bg-white pt-[2px] pl-[5px] overflow-hidden">
      <ul className="flex flex-col gap-px">
        {tree.map((n, i) => (
          <TreeRow key={n.text} node={n} first={i === 0} last={i === tree.length - 1} trail={[]} />
        ))}
      </ul>
    </div>
  </aside>
);

/* ---------- bottom tool palette ---------- */

const viewTools: React.ReactNode[] = [
  <Cube face="top" />,
  <Cube face="front" />,
  <Cube face="right" />,
  <Ic>
    <path d="M6 26 L26 10 L48 20 V46 L26 56 L6 46z" fill="#d6dde8" />
    <path d="M26 32 V55 L47 45 V20 L40 12z" fill="#f8fafc" stroke="none" />
    <path d="M0 26 L23 0 L39 9 L17 34z" fill="#1e5f88" />
    <path d="M23 0 L56 20 L52 22" />
    <path d="M35 51 V37 L44 33 V47" fill="#fff" />
  </Ic>,
  <Ic>
    <path d="M1 2 H33 V36 H1z" stroke="#4fb4de" strokeDasharray="5 4" />
    <Prism x={17} y={19} dark />
    <Prism x={45} y={21} />
    <Eye x={43} y={46} />
  </Ic>,
  <Ic>
    <path d="M1 5 H33 V37 H1z" stroke="#4fb4de" strokeDasharray="5 4" />
    <Prism x={17} y={21} dark />
    <g opacity="0.4"><Prism x={50} y={21} /></g>
    <Eye x={46} y={46} />
    <path d="M34 34 L58 57" strokeWidth="3" />
  </Ic>,
  <Ic>
    <Prism x={14} y={19} dark />
    <Prism x={40} y={21} />
    <Eye x={40} y={46} />
  </Ic>,
  <Ic>
    <circle cx="28" cy="28" r="27" fill="#fff" />
    <path d="M46 11 L35 34 L10 45 L22 21z" fill="#fff" />
    <path d="M46 11 L35 34 L22 21z" fill="#a5dff5" />
  </Ic>,
  <Ic>
    <path d="M2 15 H42 V54 H2z M7 20 H37 V49 H7z M16 2 H54 V42 L42 54 M2 15 L16 2 M42 15 L54 2 M20 7 H49 V40 M20 7 V40 H49 M12 25 H32 V44 H12z" strokeWidth="3" />
  </Ic>,
  <Ic>
    <path d="M5 8 V50 M28 8 V50 M51 8 V50 M5 8 H51 M5 28 H51 M5 50 H51" />
    <path d="M0 4 h11 v10 h-11z M23 4 h11 v10 h-11z M45 4 h11 v10 h-11z M0 42 h11 v10 h-11z M23 42 h11 v10 h-11z M45 42 h11 v10 h-11z" fill="#fff" />
  </Ic>,
  <Ic>
    <path d="M30 16 C10 16 0 22 0 27 C0 34 14 38 26 38 M38 17 C52 20 56 24 56 27 C56 34 44 38 32 39" strokeWidth="3" stroke="#6b9fb5" />
    <path d="M20 8 C24 -2 36 -2 40 24 M20 48 C24 60 34 58 37 42" strokeWidth="3" stroke="#6b9fb5" />
    <path d="M34 20 L46 22 L38 30z M20 38 L30 32 V44z" fill="#1f5f7c" stroke="none" />
  </Ic>,
  <Ic>
    <path
      d="M16 38 L8 30 Q3 28 2 33 L13 47 Q18 54 26 54 H40 Q47 52 47 44 V18 Q46 14 42 15 L41 28 V10 Q38 5 35 9 V26 V5 Q31 0 28 5 V26 V9 Q24 4 21 9 V36"
      fill="#fff"
      strokeWidth="3"
    />
  </Ic>,
  <Ic>
    <path d="M1 2 H53 V54 H1z" strokeWidth="3" fill="#fbfeff" />
    <path d="M21 22 H34 V35 H21z M20 21 L10 12 M10 20 V11 H18 M35 21 L45 12 M37 11 H45 V20 M20 36 L10 46 M10 38 V47 H18 M35 36 L45 46 M37 47 H45 V38" />
  </Ic>,
  <Ic>
    <path d="M4 13 L28 0 L52 13 V44 L28 56 L4 44z" fill="#e6eaf1" />
    <path d="M5 13 L28 1 L51 13 L28 25z" fill="#fff" stroke="none" />
    <path d="M4 24 L28 36 L52 24 V33 L28 45 L4 33z" fill="#4db4ea" />
    <path d="M4 13 V44 L28 56 L52 44 V13" />
  </Ic>,
  <Ic>
    <path d="M1 13 L25 0 L49 13 V44 L25 56 L1 44z" fill="#e6eaf1" />
    <path d="M2 13 L25 1 L48 13 L25 25z" fill="#fff" stroke="none" />
    <path d="M1 24 L25 36 L49 24 V33 L25 45 L1 33z" fill="#4db4ea" />
    <CopyBadge x={30} y={30} />
  </Ic>,
  <Ic>
    <text x="21" y="50" textAnchor="middle" fontSize="58" fill="#1d5878" stroke="none" fontFamily="Liberation Sans">A</text>
    <path d="M33 12 H53 M43 2 V22" stroke="#33a5dc" strokeWidth="4" />
  </Ic>,
  <Ic>
    <text x="21" y="50" textAnchor="middle" fontSize="58" fill="#1d5878" stroke="none" fontFamily="Liberation Sans">A</text>
    <path d="M33 12 H53" stroke="#33a5dc" strokeWidth="4" />
  </Ic>,
  <Ic>
    <path d="M20 54 L24 38 M24 18 L30 2 L36 18" stroke="#1d4f66" strokeWidth="6" />
    <path d="M0 18 H56 V40 H0z" fill="#f4fcff" stroke="#3f8fb8" />
    <text x="3" y="37" fontSize="22" fill="#41657a" stroke="none">DWG</text>
  </Ic>,
  <Ic>
    <path d="M0 10 V34" stroke="#5fbfe0" strokeWidth="3" />
    <path d="M4 21 H46" stroke="#5fbfe0" strokeDasharray="4 3" />
    <path d="M49 17 H55 V24 H49z M0 37 H55 V52 H0z" fill="#f2fbff" strokeWidth="3" />
    <path d="M8 38 V43 M15 38 V46 M22 38 V43 M29 38 V46 M36 38 V43 M43 38 V46" stroke="#5fbfe0" />
  </Ic>,
  <Ic>
    <path d="M26 8 L38 1 L45 5 V14 L54 19 V28 L40 28 L26 24z" fill="#eef1f5" />
    <path d="M0 34 L12 26 L20 30 V38 L29 42 V50 L16 57 L0 50z" fill="#eef1f5" />
    <path d="M33 28 H52 V35 H48 V31 H40 V36 H33z" fill="#8fd6f3" stroke="#39a3d2" />
    <path d="M40 36 H47 V56 H40z" fill="#e4f8ff" stroke="#39a3d2" />
  </Ic>,
  <Ic><LBlock /><RedX /></Ic>,
  <Ic><LBlock /><Mag /></Ic>,
  <Ic>
    <path d="M0 19 L37 0 L57 10 V20 L46 22 L46 30 L24 54 L2 46 L0 40 L10 36 V30 L0 27z" fill="#eceff5" />
    <path d="M0 19 L20 29 L57 10 L37 0z" fill="#fff" />
    <path d="M0 19 L20 29 V37 L15 38 V46 L24 50 V56 L0 46 V39 L8 36 V31 L0 28z" fill="#9cc8dc" />
    <Mag x={43} y={44} />
  </Ic>,
  <Ic>
    <path d="M16 8 L28 0 L40 8 V48 L28 56 L16 48z" fill="#d8e0ea" />
    <path d="M28 15 L40 8 V48 L28 56z" fill="#f8fafc" stroke="none" />
    <path d="M16 8 L28 0 L40 8 V48 L28 56 L16 48z" />
    <Mag x={44} y={44} />
  </Ic>,
  <Ic>
    <path d="M2 20 L38 0 L48 6 V40 L12 58 L2 52z" fill="#e2e8ef" />
    <path d="M3 20 L38 1 L47 6 L12 26z" fill="#fff" stroke="none" />
    <Mag x={42} y={44} />
  </Ic>,
  <Ic>
    <path d="M-1 29 L28 8 L57 29 V35 L28 52 L-1 35z" fill="#dfe7ee" />
    <path d="M1 29 L28 10 L55 29 L28 47z" fill="#fff" stroke="none" />
    <Mag x={42} y={44} />
  </Ic>,
  <Ic>
    <path d="M1 26 L22 6 L44 32 L24 56z" fill="#e8faff" />
    <path d="M8 24 L28 46 M14 18 L34 40" stroke="#5fbfe0" />
    <path d="M22 6 L30 12 L44 4 Q50 0 53 5 Q56 10 48 14 L46 22 L48 28 L44 32z" fill="#f4fbfe" />
  </Ic>,
  <Ic>
    <path d="M7 0 H49 V56 H7z" fill="#e2f7fe" strokeWidth="3" />
    <path d="M13 7 H43 V50 H13z" fill="#fff" />
    <path d="M21 11 v6 M18 14 h6 M36 11 v6 M33 14 h6 M21 40 v6 M18 43 h6 M36 40 v6 M33 43 h6" stroke="#3fa9dc" strokeWidth="4" />
  </Ic>,
  <Ic>
    <path d="M6 4 H56 M0 26 H56 M18 0 L12 8 M24 22 L18 32" strokeWidth="3" />
    <path d="M6 22 L14 9 H32 L24 22z M40 22 L46 10 H56 M40 22 H52 L56 14" stroke="#5cb8de" fill="#effbff" />
    <path d="M8 37 H56 M24 54 H56 M26 52 L32 42 H42 L36 52z" stroke="#b5c2c8" />
    <path d="M2 42 V50 H14" stroke="#2e9ad2" strokeWidth="5" />
    <path d="M12 42 L24 50 L12 56z" fill="#2e9ad2" stroke="none" />
  </Ic>,
  <Ic>
    <path d="M3 4 H40 L54 20 V32 M22 48 H3 V4 M40 4 V20 H54" fill="#f2fcff" strokeWidth="3" />
    <path d="M14 16 H26 V28 H14z" fill="#b9ecfb" stroke="none" />
    <Eye x={41} y={45} />
  </Ic>,
  <Ic>
    <path d="M26 56 H4 Q1 56 1 53 V4 Q1 1 4 1 H38 L46 10 V32" fill="#f4fcff" strokeWidth="3" />
    <path d="M8 12 H36 M14 12 L8 32 M8 38 H26 M20 18 H31 V29 H20z M36 18 L32 30" />
    <RedX x={42} y={45} />
  </Ic>,
  <Ic><LBlock /><Eye x={42} y={45} /></Ic>,
  <Ic>
    <path d="M2 56 V12 L31 1 V56z M31 12 L54 20 V56 H31 M-2 56 H58" fill="#fafdff" strokeWidth="3" />
    <path d="M8 16 L25 9 V15 L8 21z M8 27 L25 21 V27 L8 30z M8 37 L25 34 V40 H8z M8 47 H25 V53 H8z M36 19 L49 23 V28 L36 25z M36 30 L49 32 V38 L36 36z M36 40 L49 42 V46 H36z M36 49 H49 V53 H36z" />
  </Ic>,
  <Ic><path d="M-2 28 L26 10 V20 H52 V38 H26 V46z" fill={PALE} /></Ic>,
  <Ic><path d="M55 28 L28 10 V20 H2 V38 H28 V46z" fill={PALE} /></Ic>,
  <Ic>
    <path d="M4 1 H56 V56 H8 Q4 56 4 52z" fill="#f2fcff" strokeWidth="3" />
    <path d="M12 10 H56 M12 19 H56 M12 46 H56" />
    <path d="M12 28 H34" stroke="#3fa9dc" strokeWidth="3" />
    <path d="M24 36 H56" stroke="#dd4656" strokeWidth="4" />
  </Ic>,
];

const CommandArea = () => (
  <section className="h-[169px] shrink-0 bg-[#fdfdfd] flex overflow-hidden pt-[15px] pb-[11px]">
    <div className="w-[31px] shrink-0 pl-[2px] py-2">
      <div className="w-3 h-full bg-[radial-gradient(#777_1px,transparent_1px)] [background-size:4px_4px]" />
    </div>
    <div className="flex-1 min-w-0 border-2 border-[#8a8a8a] bg-white text-2xl text-[#333] flex flex-col">
      <div className="flex-1 pl-[5px] leading-[34px] whitespace-nowrap font-['Noto_Sans','Noto_Sans_CJK_SC',sans-serif]">
        <p>光标方式:用光标选择目标([Tab]转换方式,[Esc]返回)</p>
        <p>光标+窗口方式:([Tab]转换方式,按住[SHIFT]反选,右键确认,[Esc]取消)</p>
      </div>
      <div className="h-[38px] border-t-2 border-[#8a8a8a] flex items-center">
        <label htmlFor="cmd" className="w-[75px] leading-8">命令:</label>
        <input id="cmd" className="flex-1 h-full border-l-2 border-black outline-none" />
        <button type="button" title="更多" className="text-[28px] leading-8 font-bold text-black">
          &gt;.
        </button>
      </div>
    </div>
    <div className="ml-[5px] w-[1207px] shrink-0 overflow-hidden border-t-2 border-b-2 border-[#9a9a9a] border-l-0 pt-[11px]">
      <div className="grid grid-cols-[repeat(18,minmax(0,1fr))] w-[1234px] gap-y-3">
        {viewTools.map((icon, i) => (
          <button key={i} type="button" className="flex justify-center">
            {icon}
          </button>
        ))}
      </div>
    </div>
  </section>
);

const snaps = [
  { name: '点网显示', cls: 'w-[148px] bg-[#7d7d7d] mr-3' },
  { name: '角度捕捉', cls: 'w-[148px] bg-[#7d7d7d] mr-3' },
  { name: '正交模式', cls: 'w-[148px] bg-[#7d7d7d] mr-3' },
  { name: '点网捕捉', cls: 'w-[148px] bg-[#7d7d7d] mr-[10px]' },
  { name: '对象捕捉', cls: 'w-[154px] bg-[#1893b2] mr-[10px]' },
  { name: '显示叉丝', cls: 'w-[128px] bg-[#7d7d7d] mr-[10px]' },
  { name: '显示坐标', cls: 'w-[148px] bg-[#1893b2] pl-3 text-left' },
];

const StatusBar = () => (
  <footer className="h-[38px] shrink-0 bg-[#1b2942] text-white text-2xl flex items-stretch overflow-hidden">
    <div className="flex-1 flex items-center min-w-0 leading-[38px] text-[#e9edf3]">
      <span className="ml-[547px] w-[133px] font-['Liberation_Serif']">15945.</span>
      <span className="w-[179px] font-['Liberation_Serif']">17155.</span>
      <span className="w-[1093px] font-['Liberation_Serif']">0.</span>
      <span className="whitespace-nowrap">3D重生成完毕</span>
    </div>
    <div className="flex shrink-0 w-[1102px]">
      <button type="button" title="设置" className="w-[42px] mr-[14px] shrink-0 bg-[#6f7478] flex justify-center items-center">
        <svg viewBox="0 0 32 34" className="w-8 h-[34px]">
          <path
            d="M13 1 H19 L21 7 L29 7 L31 12 L27 17 L31 22 L28 28 L21 27 L19 33 H13 L11 27 L4 28 L1 22 L5 17 L1 12 L4 7 L11 7z"
            fill="#8fdcf6"
            stroke="#1c4f68"
            strokeWidth="2"
          />
          <circle cx="16" cy="17" r="5" fill="#6f7478" stroke="#1c4f68" strokeWidth="2" />
        </svg>
      </button>
      {snaps.map((s) => (
        <button key={s.name} type="button" className={clsx('shrink-0 leading-[38px] whitespace-nowrap', s.cls)}>
          {s.name}
        </button>
      ))}
    </div>
  </footer>
);

export default function App() {
  return (
    <div className="h-screen w-full flex flex-col overflow-hidden bg-white font-['Noto_Sans_CJK_SC','Noto_Sans',sans-serif]">
      <TitleBar />
      <MenuBar />
      <Ribbon />
      <div className="flex flex-1 min-h-0">
        <main className="relative flex-1 min-w-0 bg-[#141c24] border-t-2 border-[#777] overflow-hidden">
          <Plan />
          <ThicknessDialog />
          <p className="absolute left-[1665px] bottom-[-2px] text-[112px] leading-[142px] font-medium text-white whitespace-nowrap [paint-order:stroke_fill] [-webkit-text-stroke:12px_#000] font-['Liberation_Serif','Noto_Sans_CJK_SC',serif]">
            然后还有0
          </p>
        </main>
        <WorkTree />
      </div>
      <CommandArea />
      <StatusBar />
    </div>
  );
}
